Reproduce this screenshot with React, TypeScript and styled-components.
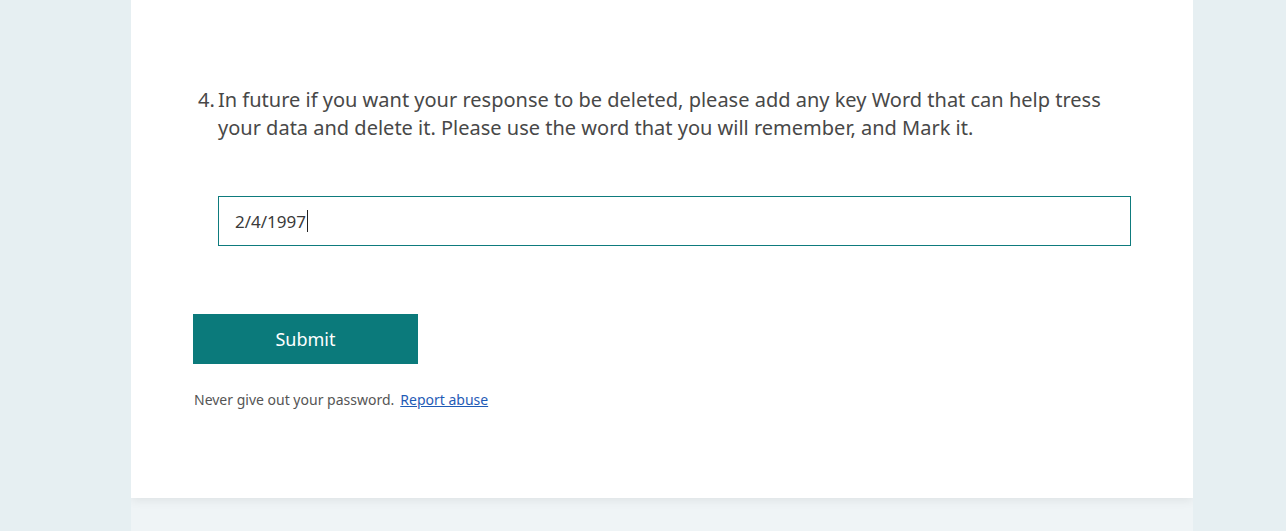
import React from 'react';
import styled, { createGlobalStyle } from 'styled-components';

const GlobalStyle = createGlobalStyle`
  html, body {
    margin: 0;
    padding: 0;
    background-color: #e6eff2;
    font-family: "Noto Sans", "Open Sans", sans-serif;
  }
`;

const Page = styled.div`
  display: flex;
  flex-direction: column;
  width: 1062px;
  margin-left: 131px;
  height: 531px;
  overflow: hidden;
`;

const Card = styled.div`
  background-color: #ffffff;
  box-shadow: 0 2px 10px rgba(0, 0, 0, 0.08);
  padding: 86px 62px 0 62px;
  display: flex;
  flex-direction: column;
  height: 498px;
  flex-shrink: 0;
  box-sizing: border-box;
  position: relative;
  z-index: 1;

  & > * {
    flex-shrink: 0;
  }
`;

const FormFooter = styled.div`
  flex: 1;
  background-color: #eff4f6;
`;

const Question = styled.div`
  display: flex;
  padding-left: 5px;
  font-size: 20px;
  line-height: 28px;
  color: #484848;
`;

const QuestionNumber = styled.span`
  width: 20px;
  flex-shrink: 0;
`;

const QuestionText = styled.div`
  width: 900px;
`;

const AnswerBox = styled.div`
  margin: 54px 0 0 25px;
  width: 913px;
  height: 50px;
  box-sizing: border-box;
  border: 1px solid #0e7b7d;
  display: flex;
  align-items: center;
  padding-left: 16px;
  font-size: 17px;
  color: #3a3a3a;
`;

const Caret = styled.span`
  display: inline-block;
  width: 1px;
  height: 22px;
  background-color: #222;
  margin-left: 1px;
`;

const SubmitButton = styled.button`
  margin-top: 68px;
  width: 225px;
  height: 50px;
  border: none;
  background-color: #0b7a7b;
  color: #ffffff;
  font-family: inherit;
  font-size: 18px;
  cursor: pointer;
`;

const Notice = styled.div`
  margin-top: 26px;
  padding-left: 1px;
  font-size: 14px;
  line-height: 20px;
  color: #555555;
  display: flex;
  gap: 6px;
`;

const ReportLink = styled.a`
  color: #1f5bb6;
  text-decoration: underline;
`;

export default function App() {
  return (
    <>
      <GlobalStyle />
      <Page>
        <Card>
          <Question>
            <QuestionNumber>4.</QuestionNumber>
            <QuestionText>
              In future if you want your response to be deleted, please add any key Word that can help tress
              your data and delete it. Please use the word that you will remember, and Mark it.
            </QuestionText>
          </Question>
          <AnswerBox>
            2/4/1997
            <Caret />
          </AnswerBox>
          <div>
            <SubmitButton>Submit</SubmitButton>
          </div>
          <Notice>
            <span>Never give out your password.</span>
            <ReportLink href="#">Report abuse</ReportLink>
          </Notice>
        </Card>
        <FormFooter />
      </Page>
    </>
  );
}
